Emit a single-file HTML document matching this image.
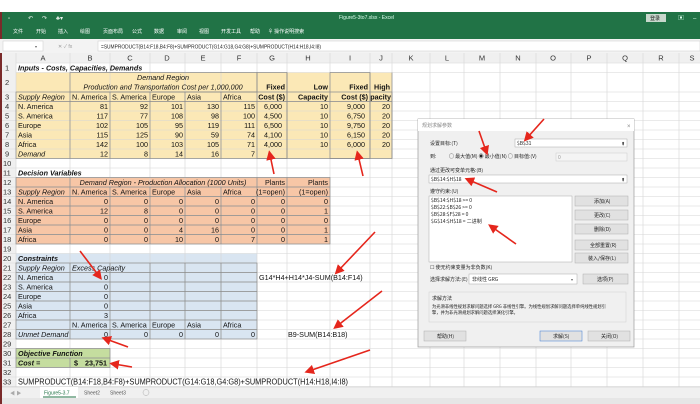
<!DOCTYPE html>
<html><head><meta charset="utf-8"><style>
html,body{margin:0;padding:0;background:#fff;width:700px;height:404px;overflow:hidden}
svg{display:block}
text{font-family:"Liberation Sans","Noto Sans CJK SC",sans-serif}
.c{font-size:7.2px;fill:#111}
.r{text-anchor:end}
.i{font-style:italic}
.b{font-weight:bold}
.h{font-size:7.5px;fill:#333;text-anchor:middle}
.rn{font-size:7.5px;fill:#333}
.d{font-size:5px;fill:#222;font-family:"Noto Sans CJK SC",sans-serif}
</style></head><body>
<svg width="700" height="404" viewBox="0 0 700 404" xmlns="http://www.w3.org/2000/svg">
<defs><marker id="ar" markerWidth="6" markerHeight="6" refX="3" refY="3" orient="auto"><path d="M0,0 L6,3 L0,6 z" fill="#e5261c"/></marker></defs>
<rect x="0" y="0" width="700" height="12" fill="#fff"/>
<rect x="0" y="12" width="700" height="27" fill="#217346"/>
<rect x="0" y="12" width="2" height="392" fill="#7a2a2a"/>
<g fill="#e8f0ea" font-size="5px">
<text x="8" y="20" style="font-size:6px">▫</text><text x="28" y="20" style="font-size:6px">↶</text><text x="42" y="20" style="font-size:6px">↷</text><text x="56" y="20" style="font-size:6px">♣▾</text>
<text x="339" y="19" style="font-size:5px" fill="#dfe">Figure5-3to7.xlsx  -  Excel</text>
<text x="13" y="33" class="d" style="fill:#fff">文件</text><text x="36" y="33" class="d" style="fill:#fff">开始</text><text x="58" y="33" class="d" style="fill:#fff">插入</text><text x="80" y="33" class="d" style="fill:#fff">绘图</text><text x="103" y="33" class="d" style="fill:#fff">页面布局</text><text x="132" y="33" class="d" style="fill:#fff">公式</text><text x="154" y="33" class="d" style="fill:#fff">数据</text><text x="177" y="33" class="d" style="fill:#fff">审阅</text><text x="199" y="33" class="d" style="fill:#fff">视图</text><text x="221" y="33" class="d" style="fill:#fff">开发工具</text><text x="250" y="33" class="d" style="fill:#fff">帮助</text><text x="268" y="33" class="d" style="fill:#fff">♀ 操作说明搜索</text>
</g>
<rect x="646" y="14" width="20" height="8" fill="#c8d8cc"/><text x="650" y="20" class="d">登录</text>
<text x="678" y="20" style="font-size:6px" fill="#dfe">▣</text><text x="693" y="20" style="font-size:6px" fill="#dfe">–</text>
<rect x="0" y="39" width="700" height="14" fill="#f3f3f3"/>
<rect x="3" y="41" width="40" height="10" fill="#fff" stroke="#ccc" stroke-width="0.5"/>
<text x="35" y="48" style="font-size:4px" fill="#666">▾</text>
<text x="58" y="48" style="font-size:5px" fill="#999">✕   ✓   fx</text>
<rect x="98" y="41" width="602" height="10" fill="#fff" stroke="#ccc" stroke-width="0.5"/>
<text x="101" y="48.5" style="font-size:5px" fill="#222" textLength="220" lengthAdjust="spacingAndGlyphs">=SUMPRODUCT(B14:F18,B4:F8)+SUMPRODUCT(G14:G18,G4:G8)+SUMPRODUCT(H14:H18,I4:I8)</text>
<rect x="2" y="53" width="698" height="10" fill="#f0f0f0"/>
<rect x="2" y="63" width="14" height="324" fill="#f0f0f0"/>
<g class="h">
<text x="43" y="60.5" class="h">A</text><text x="90" y="60.5" class="h">B</text><text x="130" y="60.5" class="h">C</text><text x="167" y="60.5" class="h">D</text><text x="203" y="60.5" class="h">E</text><text x="239" y="60.5" class="h">F</text><text x="272" y="60.5" class="h">G</text><text x="308" y="60.5" class="h">H</text><text x="350" y="60.5" class="h">I</text><text x="381" y="60.5" class="h">J</text><text x="411" y="60.5" class="h">K</text><text x="447" y="60.5" class="h">L</text><text x="482" y="60.5" class="h">M</text><text x="518" y="60.5" class="h">N</text><text x="553" y="60.5" class="h">O</text><text x="589" y="60.5" class="h">P</text><text x="625" y="60.5" class="h">Q</text><text x="661" y="60.5" class="h">R</text><text x="692" y="60.5" class="h">S</text>
</g>
<rect x="16" y="72.5" width="376" height="86" fill="#fbe8b6"/>
<rect x="16" y="177.5" width="314" height="66.5" fill="#f7c6a6"/>
<rect x="16" y="253.5" width="241" height="85.5" fill="#d9e5f1"/>
<rect x="16" y="348.5" width="94" height="19" fill="#c5dd9f"/>
<g stroke="#d6d6d6" stroke-width="0.6">
<line x1="16" y1="63" x2="700" y2="63"/><line x1="16" y1="72.5" x2="700" y2="72.5"/>
<line x1="2" y1="92" x2="700" y2="92"/><line x1="2" y1="101.5" x2="700" y2="101.5"/><line x1="2" y1="111" x2="700" y2="111"/><line x1="2" y1="120.5" x2="700" y2="120.5"/><line x1="2" y1="130" x2="700" y2="130"/><line x1="2" y1="139.5" x2="700" y2="139.5"/><line x1="2" y1="149" x2="700" y2="149"/><line x1="2" y1="158.5" x2="700" y2="158.5"/><line x1="2" y1="168" x2="700" y2="168"/><line x1="2" y1="177.5" x2="700" y2="177.5"/><line x1="2" y1="187" x2="700" y2="187"/><line x1="2" y1="196.5" x2="700" y2="196.5"/><line x1="2" y1="206" x2="700" y2="206"/><line x1="2" y1="215.5" x2="700" y2="215.5"/><line x1="2" y1="225" x2="700" y2="225"/><line x1="2" y1="234.5" x2="700" y2="234.5"/><line x1="2" y1="244" x2="700" y2="244"/><line x1="2" y1="253.5" x2="700" y2="253.5"/><line x1="2" y1="263" x2="700" y2="263"/><line x1="2" y1="272.5" x2="700" y2="272.5"/><line x1="2" y1="282" x2="700" y2="282"/><line x1="2" y1="291.5" x2="700" y2="291.5"/><line x1="2" y1="301" x2="700" y2="301"/><line x1="2" y1="310.5" x2="700" y2="310.5"/><line x1="2" y1="320" x2="700" y2="320"/><line x1="2" y1="329.5" x2="700" y2="329.5"/><line x1="2" y1="339" x2="700" y2="339"/><line x1="2" y1="348.5" x2="700" y2="348.5"/><line x1="2" y1="358" x2="700" y2="358"/><line x1="2" y1="367.5" x2="700" y2="367.5"/><line x1="2" y1="377" x2="700" y2="377"/><line x1="2" y1="386.5" x2="700" y2="386.5"/>
<line x1="16" y1="53" x2="16" y2="387"/><line x1="70" y1="53" x2="70" y2="387"/><line x1="110" y1="53" x2="110" y2="387"/><line x1="150" y1="53" x2="150" y2="387"/><line x1="185" y1="53" x2="185" y2="387"/><line x1="221" y1="53" x2="221" y2="387"/><line x1="257" y1="53" x2="257" y2="387"/><line x1="287" y1="53" x2="287" y2="387"/><line x1="330" y1="53" x2="330" y2="387"/><line x1="370" y1="53" x2="370" y2="387"/><line x1="392" y1="53" x2="392" y2="387"/><line x1="430" y1="53" x2="430" y2="387"/><line x1="464" y1="53" x2="464" y2="387"/><line x1="500" y1="53" x2="500" y2="387"/><line x1="536" y1="53" x2="536" y2="387"/><line x1="571" y1="53" x2="571" y2="387"/><line x1="607" y1="53" x2="607" y2="387"/><line x1="643" y1="53" x2="643" y2="387"/><line x1="679" y1="53" x2="679" y2="387"/>
</g>
<g stroke="#8a8a8a" stroke-width="0.7" fill="none">
<rect x="70" y="72.5" width="187" height="19.5"/><rect x="257" y="72.5" width="30" height="86"/><rect x="330" y="72.5" width="40" height="86"/><rect x="16" y="92" width="376" height="66.5"/>
<path d="M70 92V158.5M110 92V158.5M150 92V158.5M185 92V158.5M221 92V158.5M287 72.5V158.5M370 72.5V158.5M392 72.5V158.5M16 101.5H392"/>
<rect x="16" y="177.5" width="314" height="66.5"/><path d="M70 177.5V244M110 187V244M150 187V244M185 187V244M221 187V244M257 177.5V244M287 177.5V244M16 196.5H330M16 187H330M16 206H330M16 215.5H330M16 225H330M16 234.5H330"/>
<rect x="16" y="263" width="241" height="76"/><path d="M70 263V339M110 263V339M150 263V339M185 263V339M221 263V339M16 272.5H257M16 282H257M16 291.5H257M16 301H257M16 310.5H257M16 320H257M16 329.5H257"/>
<rect x="16" y="348.5" width="94" height="19"/><path d="M70 358V367.5M16 358H110"/>
</g>
<g class="rn">
<text x="5" y="70.5">1</text><text x="5" y="85">2</text><text x="5" y="99.5">3</text><text x="5" y="109">4</text><text x="5" y="118.5">5</text><text x="5" y="128">6</text><text x="5" y="137.5">7</text><text x="5" y="147">8</text><text x="5" y="156.5">9</text><text x="3" y="166">10</text><text x="3" y="175.5">11</text><text x="3" y="185">12</text><text x="3" y="194.5">13</text><text x="3" y="204">14</text><text x="3" y="213.5">15</text><text x="3" y="223">16</text><text x="3" y="232.5">17</text><text x="3" y="242">18</text><text x="3" y="251.5">19</text><text x="3" y="261">20</text><text x="3" y="270.5">21</text><text x="3" y="280">22</text><text x="3" y="289.5">23</text><text x="3" y="299">24</text><text x="3" y="308.5">25</text><text x="3" y="318">26</text><text x="3" y="327.5">27</text><text x="3" y="337">28</text><text x="3" y="346.5">29</text><text x="3" y="356">30</text><text x="3" y="365.5">31</text><text x="3" y="375">32</text><text x="3" y="384.5">33</text>
</g>
<text x="18" y="70.5" class="c b i">Inputs - Costs, Capacities, Demands</text>
<text x="163" y="80" class="c i" text-anchor="middle">Demand Region</text>
<text x="163" y="89.5" class="c i" text-anchor="middle">Production and Transportation Cost per 1,000,000</text>
<text x="285" y="89.5" class="c b r">Fixed</text><text x="328" y="89.5" class="c b r">Low</text><text x="368" y="89.5" class="c b r">Fixed</text><text x="390" y="89.5" class="c b r">High</text>
<text x="18" y="99.5" class="c i">Supply Region</text><text x="72" y="99.5" class="c">N. America</text><text x="112" y="99.5" class="c">S. America</text><text x="152" y="99.5" class="c">Europe</text><text x="187" y="99.5" class="c">Asia</text><text x="223" y="99.5" class="c">Africa</text>
<text x="285" y="99.5" class="c b r">Cost ($)</text><text x="328" y="99.5" class="c b r">Capacity</text><text x="368" y="99.5" class="c b r">Cost ($)</text><text x="391" y="99.5" class="c b r">pacity</text>
<g class="c r">
<text x="18" y="109" text-anchor="start">N. America</text><text x="108" y="109">81</text><text x="148" y="109">92</text><text x="183" y="109">101</text><text x="219" y="109">130</text><text x="255" y="109">115</text><text x="282" y="109">6,000</text><text x="328" y="109">10</text><text x="365" y="109">9,000</text><text x="390" y="109">20</text>
<text x="18" y="118.5" text-anchor="start">S. America</text><text x="108" y="118.5">117</text><text x="148" y="118.5">77</text><text x="183" y="118.5">108</text><text x="219" y="118.5">98</text><text x="255" y="118.5">100</text><text x="282" y="118.5">4,500</text><text x="328" y="118.5">10</text><text x="365" y="118.5">6,750</text><text x="390" y="118.5">20</text>
<text x="18" y="128" text-anchor="start">Europe</text><text x="108" y="128">102</text><text x="148" y="128">105</text><text x="183" y="128">95</text><text x="219" y="128">119</text><text x="255" y="128">111</text><text x="282" y="128">6,500</text><text x="328" y="128">10</text><text x="365" y="128">9,750</text><text x="390" y="128">20</text>
<text x="18" y="137.5" text-anchor="start">Asia</text><text x="108" y="137.5">115</text><text x="148" y="137.5">125</text><text x="183" y="137.5">90</text><text x="219" y="137.5">59</text><text x="255" y="137.5">74</text><text x="282" y="137.5">4,100</text><text x="328" y="137.5">10</text><text x="365" y="137.5">6,150</text><text x="390" y="137.5">20</text>
<text x="18" y="147" text-anchor="start">Africa</text><text x="108" y="147">142</text><text x="148" y="147">100</text><text x="183" y="147">103</text><text x="219" y="147">105</text><text x="255" y="147">71</text><text x="282" y="147">4,000</text><text x="328" y="147">10</text><text x="365" y="147">6,000</text><text x="390" y="147">20</text>
<text x="18" y="156.5" text-anchor="start" font-style="italic">Demand</text><text x="108" y="156.5">12</text><text x="148" y="156.5">8</text><text x="183" y="156.5">14</text><text x="219" y="156.5">16</text><text x="255" y="156.5">7</text>
</g>
<text x="18" y="175.5" class="c b i">Decision Variables</text>
<text x="163" y="185" class="c i" text-anchor="middle">Demand Region - Production Allocation (1000 Units)</text>
<text x="285" y="185" class="c r">Plants</text><text x="328" y="185" class="c r">Plants</text>
<text x="18" y="194.5" class="c i">Supply Region</text><text x="72" y="194.5" class="c">N. America</text><text x="112" y="194.5" class="c">S. America</text><text x="152" y="194.5" class="c">Europe</text><text x="187" y="194.5" class="c">Asia</text><text x="223" y="194.5" class="c">Africa</text><text x="285" y="194.5" class="c r">(1=open)</text><text x="328" y="194.5" class="c r">(1=open)</text>
<g class="c r">
<text x="18" y="204" text-anchor="start">N. America</text><text x="108" y="204">0</text><text x="148" y="204">0</text><text x="183" y="204">0</text><text x="219" y="204">0</text><text x="255" y="204">0</text><text x="285" y="204">0</text><text x="328" y="204">0</text>
<text x="18" y="213.5" text-anchor="start">S. America</text><text x="108" y="213.5">12</text><text x="148" y="213.5">8</text><text x="183" y="213.5">0</text><text x="219" y="213.5">0</text><text x="255" y="213.5">0</text><text x="285" y="213.5">0</text><text x="328" y="213.5">1</text>
<text x="18" y="223" text-anchor="start">Europe</text><text x="108" y="223">0</text><text x="148" y="223">0</text><text x="183" y="223">0</text><text x="219" y="223">0</text><text x="255" y="223">0</text><text x="285" y="223">0</text><text x="328" y="223">0</text>
<text x="18" y="232.5" text-anchor="start">Asia</text><text x="108" y="232.5">0</text><text x="148" y="232.5">0</text><text x="183" y="232.5">4</text><text x="219" y="232.5">16</text><text x="255" y="232.5">0</text><text x="285" y="232.5">0</text><text x="328" y="232.5">1</text>
<text x="18" y="242" text-anchor="start">Africa</text><text x="108" y="242">0</text><text x="148" y="242">0</text><text x="183" y="242">10</text><text x="219" y="242">0</text><text x="255" y="242">7</text><text x="285" y="242">0</text><text x="328" y="242">1</text>
</g>
<text x="18" y="261" class="c b i">Constraints</text>
<text x="18" y="270.5" class="c i">Supply Region</text><text x="72" y="270.5" class="c i">Excess Capacity</text>
<g class="c r">
<text x="18" y="280" text-anchor="start">N. America</text><text x="108" y="280">0</text>
<text x="18" y="289.5" text-anchor="start">S. America</text><text x="108" y="289.5">0</text>
<text x="18" y="299" text-anchor="start">Europe</text><text x="108" y="299">0</text>
<text x="18" y="308.5" text-anchor="start">Asia</text><text x="108" y="308.5">0</text>
<text x="18" y="318" text-anchor="start">Africa</text><text x="108" y="318">3</text>
<text x="72" y="327.5" text-anchor="start">N. America</text><text x="112" y="327.5" text-anchor="start">S. America</text><text x="152" y="327.5" text-anchor="start">Europe</text><text x="187" y="327.5" text-anchor="start">Asia</text><text x="223" y="327.5" text-anchor="start">Africa</text>
<text x="18" y="337" text-anchor="start" font-style="italic">Unmet Demand</text><text x="108" y="337">0</text><text x="148" y="337">0</text><text x="183" y="337">0</text><text x="219" y="337">0</text><text x="255" y="337">0</text>
</g>
<text x="259" y="280" class="c">G14*H4+H14*J4-SUM(B14:F14)</text>
<text x="288" y="337" class="c">B9-SUM(B14:B18)</text>
<text x="18" y="356" class="c b i">Objective Function</text>
<text x="18" y="365.5" class="c b i">Cost =</text><text x="74" y="365.5" class="c b">$</text><text x="107" y="365.5" class="c b r">23,751</text>
<text x="18" y="384.5" class="c" style="font-size:8.6px" textLength="330" lengthAdjust="spacingAndGlyphs">SUMPRODUCT(B14:F18,B4:F8)+SUMPRODUCT(G14:G18,G4:G8)+SUMPRODUCT(H14:H18,I4:I8)</text>
<rect x="2" y="387" width="698" height="17" fill="#f0f0f0"/>
<line x1="2" y1="387" x2="700" y2="387" stroke="#c8c8c8" stroke-width="0.6"/>
<text x="10" y="395" style="font-size:5px" fill="#aaa">◀   ▶</text>
<rect x="40" y="387" width="38" height="11" fill="#fff"/><line x1="43" y1="397" x2="76" y2="397" stroke="#217346"/>
<text x="44" y="394.5" style="font-size:5px" fill="#217346">Figure5-3.7</text>
<text x="84" y="394.5" style="font-size:5px" fill="#555">Sheet2</text><text x="110" y="394.5" style="font-size:5px" fill="#555">Sheet3</text>
<circle cx="146" cy="392.5" r="3" fill="none" stroke="#aaa" stroke-width="0.5"/>
<rect x="2" y="398" width="698" height="6" fill="#e6e6e6"/>
<rect x="418" y="119" width="216" height="228" fill="#f0f0f0" stroke="#9a9a9a" stroke-width="0.7"/>
<rect x="418" y="119" width="216" height="12" fill="#fff"/>
<text x="422" y="127" class="d" style="fill:#888">规划求解参数</text><text x="627" y="128" style="font-size:6px" fill="#888">×</text>
<text x="430" y="145" class="d">设置目标:(T)</text>
<rect x="515" y="139" width="112" height="8" fill="#fff" stroke="#aaa" stroke-width="0.5"/><text x="517" y="145" class="d">$B$31</text><text x="621" y="145.5" style="font-size:5px">⇞</text>
<text x="430" y="158" class="d">到:</text>
<text x="449" y="158" class="d">○ 最大值(M)  ◉ 最小值(N)  ○ 目标值:(V)</text>
<rect x="556" y="153" width="71" height="8" fill="#f4f4f4" stroke="#ccc" stroke-width="0.5"/><text x="558" y="159" class="d" style="fill:#999">0</text>
<text x="430" y="172" class="d">通过更改可变单元格:(B)</text>
<rect x="429" y="175" width="198" height="8" fill="#fff" stroke="#aaa" stroke-width="0.5"/><text x="431" y="181" class="d">$B$14:$H$18</text><text x="621" y="181.5" style="font-size:5px">⇞</text>
<text x="430" y="193" class="d">遵守约束:(U)</text>
<rect x="429" y="196" width="143" height="66" fill="#fff" stroke="#aaa" stroke-width="0.5"/>
<text x="431" y="202" class="d">$B$14:$H$18 &gt;= 0</text><text x="431" y="209" class="d">$B$22:$B$26 &gt;= 0</text><text x="431" y="216" class="d">$B$28:$F$28 = 0</text><text x="431" y="223" class="d">$G$14:$H$18 = 二进制</text>
<g fill="#e1e1e1" stroke="#adadad" stroke-width="0.5">
<rect x="575" y="196" width="53" height="10"/><rect x="575" y="210" width="53" height="10"/><rect x="575" y="224" width="53" height="10"/><rect x="575" y="240" width="53" height="10"/><rect x="575" y="253" width="53" height="10"/>
<rect x="583" y="274" width="45" height="10"/><rect x="424" y="331" width="42" height="10"/><rect x="540" y="331" width="42" height="10" stroke="#3b7bd4"/><rect x="588" y="331" width="42" height="10"/>
</g>
<text x="594" y="203" class="d">添加(A)</text><text x="594" y="217" class="d">更改(C)</text><text x="594" y="231" class="d">删除(D)</text><text x="590" y="247" class="d">全部重置(R)</text><text x="588" y="260" class="d">装入/保存(L)</text>
<text x="430" y="269" class="d">☐ 使无约束变量为非负数(K)</text>
<text x="430" y="281" class="d">选择求解方法:(E)</text>
<rect x="469" y="274" width="108" height="10" fill="#fff" stroke="#aaa" stroke-width="0.5"/><text x="472" y="281" class="d">非线性 GRG</text><text x="571" y="281" style="font-size:4px" fill="#666">▾</text>
<text x="597" y="281" class="d">选项(P)</text>
<rect x="429" y="292" width="197" height="30" fill="none" stroke="#d0d0d0" stroke-width="0.5"/>
<text x="432" y="300" class="d">求解方法</text>
<text x="432" y="308" class="d" style="font-size:4.3px">为光滑非线性规划求解问题选择 GRG 非线性引擎。为线性规划求解问题选择单纯线性规划引</text>
<text x="432" y="314" class="d" style="font-size:4.3px">擎，并为非光滑规划求解问题选择演化引擎。</text>
<text x="437" y="338" class="d">帮助(H)</text><text x="553" y="338" class="d">求解(S)</text><text x="601" y="338" class="d">关闭(O)</text>
<g stroke="#e5261c" stroke-width="1.6" marker-end="url(#ar)">
<line x1="274" y1="174" x2="270" y2="155"/>
<line x1="363" y1="176" x2="358" y2="155"/>
<line x1="544" y1="119" x2="527" y2="138"/>
<line x1="479" y1="131" x2="486" y2="151"/>
<line x1="497" y1="192" x2="469" y2="180"/>
<line x1="516" y1="244" x2="492" y2="227"/>
<line x1="375" y1="232" x2="338" y2="271"/>
<line x1="382" y1="291" x2="337" y2="326"/>
<line x1="80" y1="251" x2="99" y2="276"/>
<line x1="128" y1="347" x2="106" y2="339"/>
<line x1="132" y1="367" x2="114" y2="364"/>
<line x1="370" y1="350" x2="309" y2="371"/>
</g>
</svg>
</body></html>
